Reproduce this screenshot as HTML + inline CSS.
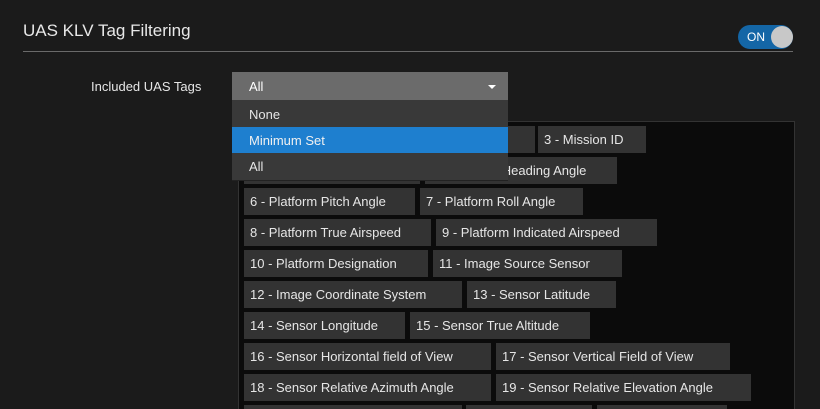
<!DOCTYPE html><html style="overflow:hidden;height:409px"><head><style>
body{margin:0;width:820px;height:409px;overflow:hidden;background:#1b1b1b;font-family:"Liberation Sans",sans-serif;color:#ddd;position:relative}
.a{position:absolute}
.t{position:absolute;height:27px;line-height:27px;background:#333;color:#e6e6e6;font-size:13px;padding-left:6px;white-space:nowrap;overflow:hidden;box-sizing:border-box}
</style></head><body>
<div style="position:absolute;left:0;top:0;width:820px;height:409px;overflow:hidden">
<div class="a" style="left:23px;top:21px;font-size:17px;color:#e8e8e8">UAS KLV Tag Filtering</div>
<div class="a" style="left:23px;top:51px;width:770px;height:1px;background:#6a6a6a"></div>
<div class="a" style="left:738px;top:25px;width:55px;height:24px;border-radius:12px;background:#1466a6"></div>
<div class="a" style="left:747px;top:30px;font-size:12px;color:#fff">ON</div>
<div class="a" style="left:771px;top:26px;width:22px;height:22px;border-radius:11px;background:#c8c8c8"></div>
<div class="a" style="left:91px;top:79px;font-size:13px;color:#e6e6e6">Included UAS Tags</div>
<div class="a" style="left:238px;top:121px;width:555px;height:288px;background:#0b0b0b;border:1px solid #333;border-bottom:none"></div>
<div class="t" style="left:244px;top:126px;width:291px;">1 - Checksum&nbsp;&nbsp; 2 - UNIX Time Stamp</div>
<div class="t" style="left:538px;top:126px;width:108px">3 - Mission ID</div>
<div class="t" style="left:244px;top:157px;width:176px">4 - Platform Tail Number</div>
<div class="t" style="left:425px;top:157px;width:192px">5 - Platform Heading Angle</div>
<div class="t" style="left:244px;top:188px;width:171px">6 - Platform Pitch Angle</div>
<div class="t" style="left:420px;top:188px;width:163px">7 - Platform Roll Angle</div>
<div class="t" style="left:244px;top:219px;width:187px">8 - Platform True Airspeed</div>
<div class="t" style="left:436px;top:219px;width:221px">9 - Platform Indicated Airspeed</div>
<div class="t" style="left:244px;top:250px;width:184px">10 - Platform Designation</div>
<div class="t" style="left:433px;top:250px;width:189px">11 - Image Source Sensor</div>
<div class="t" style="left:244px;top:281px;width:218px">12 - Image Coordinate System</div>
<div class="t" style="left:467px;top:281px;width:149px">13 - Sensor Latitude</div>
<div class="t" style="left:244px;top:312px;width:161px">14 - Sensor Longitude</div>
<div class="t" style="left:410px;top:312px;width:180px">15 - Sensor True Altitude</div>
<div class="t" style="left:244px;top:343px;width:247px">16 - Sensor Horizontal field of View</div>
<div class="t" style="left:496px;top:343px;width:234px">17 - Sensor Vertical Field of View</div>
<div class="t" style="left:244px;top:374px;width:247px">18 - Sensor Relative Azimuth Angle</div>
<div class="t" style="left:496px;top:374px;width:255px">19 - Sensor Relative Elevation Angle</div>
<div class="t" style="left:244px;top:405px;width:218px;height:4px"></div>
<div class="t" style="left:466px;top:405px;width:126px;height:4px"></div>
<div class="t" style="left:597px;top:405px;width:130px;height:4px"></div>
<div class="a" style="left:232px;top:72px;width:276px;height:28px;background:#6b6b6b"></div>
<div class="a" style="left:249px;top:79px;font-size:13px;color:#fff">All</div>
<div class="a" style="left:488px;top:85px;width:0;height:0;border-left:4px solid transparent;border-right:4px solid transparent;border-top:4px solid #fff"></div>
<div class="a" style="left:232px;top:100px;width:276px;height:80px;background:#393939;border-bottom:1px solid #222"></div>
<div class="a" style="left:249px;top:107px;font-size:13px;color:#e6e6e6">None</div>
<div class="a" style="left:232px;top:127px;width:276px;height:26px;background:#1e7fcf"></div>
<div class="a" style="left:249px;top:133px;font-size:13px;color:#f0f0f0">Minimum Set</div>
<div class="a" style="left:249px;top:159px;font-size:13px;color:#e6e6e6">All</div>
</div>
</body></html>
